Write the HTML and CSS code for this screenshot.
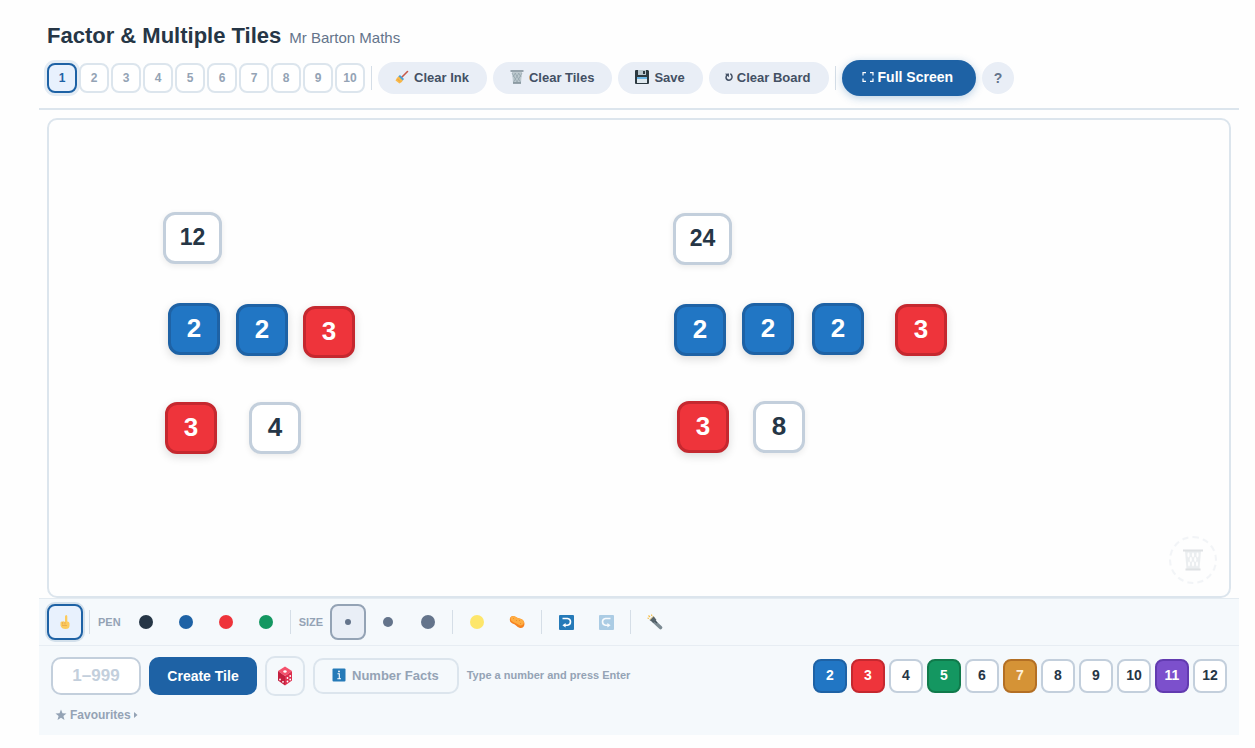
FILE: index.html
```html
<!DOCTYPE html>
<html lang="en">
<head>
    <meta charset="UTF-8">
    <meta name="viewport" content="width=device-width, initial-scale=1.0">
    <title>Factor &amp; Multiple Tiles</title>
    <link rel="stylesheet" href="styles.css">
</head>
<body>

    <!-- Title and board actions -->
    <header class="header">
        <div class="title-row">
            <h1>Factor &amp; Multiple Tiles</h1>
            <span class="subtitle">Mr Barton Maths</span>
        </div>
        <div class="actions">
            <nav class="pages">
                <button class="page active">1</button>
                <button class="page">2</button>
                <button class="page">3</button>
                <button class="page">4</button>
                <button class="page">5</button>
                <button class="page">6</button>
                <button class="page">7</button>
                <button class="page">8</button>
                <button class="page">9</button>
                <button class="page">10</button>
            </nav>
            <span class="divider"></span>
            <button class="pill">
                <svg width="16" height="16" viewBox="0 0 16 16">
                    <path d="M8 8 L13.5 2.5" stroke="#c65a4a" stroke-width="1.6" stroke-linecap="round"/>
                    <path d="M5 7 L9 11 Q8 14 5.500 14.5 L1.5 11.5 Q2.5 8.5 5 7Z" fill="#f9b94b"/>
                    <path d="M6 6 L10 10 L8.8 11.6 L4.4 7.2Z" fill="#4a9fd4"/>
                    <path d="M3.500 10 L6 12.5" stroke="#e59a2f" stroke-width="0.8"/>
                </svg>
                Clear Ink
            </button>
            <button class="pill">
                <svg width="16" height="16" viewBox="0 0 16 16">
                    <path d="M3 3 H13 L12 14 H4Z" fill="#bcc8ce"/>
                    <path d="M3 4 L8 13 M6 4 L11.5 13 M9.5 4 L12 8 M13 4 L8 13 M10 4 L4.5 13 M6.5 4 L4 8" stroke="#8fa0a9" stroke-width="0.7" fill="none"/>
                    <path d="M1.5 2 H14.5 M4 14 H12" stroke="#7b8b94" stroke-width="1.5"/>
                </svg>
                Clear Tiles
            </button>
            <button class="pill">
                <svg width="16" height="16" viewBox="0 0 16 16">
                    <path d="M1 2 Q1 1 2 1 H14 L15 2 V14 Q15 15 14 15 H2 Q1 15 1 14Z" fill="#2c3940"/>
                    <rect x="4" y="1" width="8" height="5" fill="#b9c6cd"/>
                    <rect x="9" y="2" width="2" height="3" fill="#2c3940"/>
                    <rect x="3" y="8" width="10" height="6" fill="#dfe8ee"/>
                    <rect x="3" y="8" width="10" height="2" fill="#6cb7e6"/>
                </svg>
                Save
            </button>
            <button class="pill">
                <svg width="8" height="12" viewBox="0 0 8 12">
                    <path d="M5.4 2.6 Q7.3 4 7 6.4 Q6.4 9.3 3.8 9.300 Q1.200 9 1 6.4 Q1 4.600 2.600 3.6" fill="none" stroke="#435064" stroke-width="1.5"/>
                    <path d="M0 2.8 L4 2.4 L3.8 6.2Z" fill="#435064"/>
                </svg>
                Clear Board
            </button>
            <span class="divider"></span>
            <button class="pill pill-primary">
                <svg width="12" height="12" viewBox="0 0 12 12">
                    <path d="M1 4.6 V1.6 H4 M8 1.6 H11 V4.6 M11 7.4 V10.4 H8 M4 10.4 H1 V7.4" fill="none" stroke="#fff" stroke-width="1.2"/>
                </svg>
                Full Screen
            </button>
            <button class="help">?</button>
        </div>
    </header>

    <!-- Board with the loose tiles -->
    <main class="board">
        <button class="tile wide pos-a1">12</button>
        <button class="tile two pos-a2">2</button>
        <button class="tile two pos-a3">2</button>
        <button class="tile three pos-a4">3</button>
        <button class="tile three pos-a5">3</button>
        <button class="tile pos-a6">4</button>

        <button class="tile wide pos-b1">24</button>
        <button class="tile two pos-b2">2</button>
        <button class="tile two pos-b3">2</button>
        <button class="tile two pos-b4">2</button>
        <button class="tile three pos-b5">3</button>
        <button class="tile three pos-b6">3</button>
        <button class="tile pos-b7">8</button>

        <div class="bin">
            <svg width="20" height="22" viewBox="0 0 20 22">
                <path d="M2 2 H18 L16.5 20 H3.5Z" fill="#a5b3bd"/>
                <g fill="#fff">
                    <ellipse cx="5.5" cy="6" rx="1.1" ry="2.4"/>
                    <ellipse cx="10" cy="6" rx="1.1" ry="2.4"/>
                    <ellipse cx="14.5" cy="6" rx="1.1" ry="2.4"/>
                    <ellipse cx="7.8" cy="10.5" rx="1.1" ry="2.4"/>
                    <ellipse cx="12.2" cy="10.5" rx="1.1" ry="2.4"/>
                    <ellipse cx="6" cy="15" rx="1" ry="2.4"/>
                    <ellipse cx="10" cy="15" rx="1.1" ry="2.4"/>
                    <ellipse cx="14" cy="15" rx="1" ry="2.4"/>
                </g>
                <path d="M0 1.5 H20 M2.5 20.5 H17.5" stroke="#66757f" stroke-width="2"/>
            </svg>
        </div>
    </main>

    <!-- Drawing tools -->
    <section class="tools">
        <button class="tool selected" aria-label="Move">
            <svg width="12" height="16" viewBox="0 0 12 16">
                <path d="M6 8 V2.5 Q6.2 1 7.2 1 Q8.3 1 8.3 2.5 V7.5 Q10.5 7.5 10.5 9.5 V11.5 Q10.5 15 6.5 15 Q2.5 15 1.5 11.5 V8.5 Q2 7 3.5 7.5 Q4.8 6.8 6 8Z" fill="#fccb5e"/>
                <path d="M3.6 8 V10.5 M6 8 V10.5 M3 11.5 H8" stroke="#e5a64e" stroke-width="0.8" fill="none"/>
            </svg>
        </button>
        <span class="divider"></span>
        <span class="label">PEN</span>
        <button class="tool" aria-label="Black pen"><span class="dot black"></span></button>
        <button class="tool" aria-label="Blue pen"><span class="dot blue"></span></button>
        <button class="tool" aria-label="Red pen"><span class="dot red"></span></button>
        <button class="tool" aria-label="Green pen"><span class="dot green"></span></button>
        <span class="divider"></span>
        <span class="label">SIZE</span>
        <button class="tool size-selected" aria-label="Thin"><span class="dot grey small"></span></button>
        <button class="tool" aria-label="Medium"><span class="dot grey medium"></span></button>
        <button class="tool" aria-label="Thick"><span class="dot grey"></span></button>
        <span class="divider"></span>
        <button class="tool" aria-label="Highlighter"><span class="dot yellow"></span></button>
        <button class="tool" aria-label="Eraser">
            <svg width="16" height="14" viewBox="0 0 16 14">
                <path d="M1 3 Q2.5 0 6 1.5 Q8 3 10.5 3.5 Q15.5 4.5 15.5 9 Q15 13.5 11 13 Q8.5 12 7 10.5 Q5.5 9 3.5 8.5 Q0 7 1 3Z" fill="#f58220"/>
                <path d="M1.5 2.5 Q3.5 0 6 1.5 Q8 3 10.5 3.5 Q14.5 4 15 7.5 Q14 11 10.5 10.3 Q8 8.5 5 7.4 Q1 6 1.5 2.5Z" fill="#ffad42"/>
                <path d="M4 3.5 H5 M7 5.5 H8 M10 5.5 H11 M11 8.5 H12" stroke="#ee922c" stroke-width="1"/>
            </svg>
        </button>
        <span class="divider"></span>
        <button class="tool" aria-label="Undo">
            <svg width="15" height="15" viewBox="0 0 15 15">
                <rect width="15" height="15" rx="1" fill="#257ab8"/>
                <path d="M3.5 3.5 H8.5 Q11.5 3.800 11.5 6.8 Q11.5 9.8 8.5 10.2 H6" fill="none" stroke="#fff" stroke-width="1.6"/>
                <path d="M6.6 8 V12.4 L3.4 10.2Z" fill="#fff"/>
            </svg>
        </button>
        <button class="tool" aria-label="Redo" disabled>
            <svg width="15" height="15" viewBox="0 0 15 15">
                <rect width="15" height="15" rx="1" fill="#257ab8"/>
                <path d="M11.5 3.5 H6.5 Q3.5 3.8 3.5 6.8 Q3.5 9.8 6.5 10.2 H9" fill="none" stroke="#fff" stroke-width="1.6"/>
                <path d="M8.4 8 V12.4 L11.6 10.2Z" fill="#fff"/>
            </svg>
        </button>
        <span class="divider"></span>
        <button class="tool" aria-label="Torch">
            <svg width="16" height="16" viewBox="0 0 16 16">
                <path d="M7 7.5 L13.5 13.5" stroke="#7b8a92" stroke-width="3.6" stroke-linecap="round"/>
                <path d="M2.5 6 L6.5 2 L9.5 6 L6.5 9Z" fill="#56646c"/>
                <path d="M8 7 L10 9" stroke="#46545c" stroke-width="1.5"/>
                <path d="M0.5 4 L2 4.5 M1.5 1.5 L3 3 M4.5 0.5 L4.8 2" stroke="#f6bd45" stroke-width="1.2"/>
                <path d="M2.5 6 L6.5 2" stroke="#f9d98c" stroke-width="1"/>
            </svg>
        </button>
    </section>

    <!-- Tile maker and tray -->
    <footer class="panel">
        <div class="panel-row">
            <input class="number-input" type="text" inputmode="numeric" placeholder="1–999" aria-label="Tile number">
            <button class="create">Create Tile</button>
            <button class="dice" aria-label="Random tile">
                <svg width="16" height="20" viewBox="0 0 16 20">
                    <path d="M8 0.500 L15 5 L8 10 L1 5Z" fill="#f4516c"/>
                    <path d="M1 5 L8 10 V19.500 L1 14.500Z" fill="#c41f3e"/>
                    <path d="M15 5 L8 10 V19.500 L15 14.500Z" fill="#dd2e4e"/>
                    <g fill="#fff">
                        <ellipse cx="8" cy="5.5" rx="1.7" ry="1.2"/>
                        <circle cx="3" cy="13.5" r="0.9"/>
                        <circle cx="6" cy="15.800" r="0.9"/>
                        <circle cx="10.5" cy="12" r="0.9"/>
                        <circle cx="13.2" cy="10" r="0.9"/>
                        <circle cx="10.5" cy="15.5" r="0.9"/>
                        <circle cx="13.2" cy="13.5" r="0.9"/>
                    </g>
                </svg>
            </button>
            <button class="facts">
                <svg width="14" height="14" viewBox="0 0 14 14">
                    <rect width="13" height="13" x="0.5" y="0.5" rx="1" fill="#257ab8"/>
                    <path d="M5.5 5.8 H7.3 V10.8 M5.3 10.8 H9" fill="none" stroke="#fff" stroke-width="1.1"/>
                    <circle cx="7" cy="3.4" r="0.9" fill="#fff"/>
                </svg>
                Number Facts
            </button>
            <span class="hint">Type a number and press Enter</span>
            <div class="tray">
                <button class="mini two">2</button>
                <button class="mini three">3</button>
                <button class="mini">4</button>
                <button class="mini five">5</button>
                <button class="mini">6</button>
                <button class="mini seven">7</button>
                <button class="mini">8</button>
                <button class="mini">9</button>
                <button class="mini">10</button>
                <button class="mini eleven">11</button>
                <button class="mini">12</button>
            </div>
        </div>
        <button class="favourites">
            <svg width="12" height="12" viewBox="0 0 12 12">
                <path d="M6 0.5 L7.5 4.3 L11.5 4.5 L8.4 7 L9.5 11 L6 8.7 L2.5 11 L3.6 7 L0.5 4.5 L4.5 4.3Z" fill="#94a3b5"/>
            </svg>
            Favourites
            <svg width="4" height="6" viewBox="0 0 4 6">
                <path d="M0 0 L3.5 3 L0 6Z" fill="#94a3b5"/>
            </svg>
        </button>
    </footer>

</body>
</html>
```

FILE: styles.css
```css
* {
    box-sizing: border-box;
}

body {
    display: flex;
    flex-direction: column;
    min-height: 100vh;
    margin: 0;
    padding: 0 16px 13px 39px;
    background-color: #fefefe;
    color: #263646;
    font-family: "Liberation Sans", Arial, sans-serif;
}

button,
input {
    font-family: inherit;
    font-weight: bold;
}

button {
    display: flex;
    justify-content: center;
    align-items: center;
    padding: 0;
    border: none;
    background: none;
    cursor: pointer;
}

svg {
    flex-shrink: 0;
}

/* Header */
.header {
    padding: 22px 8px 12px;
    border-bottom: 2px solid #dce5ed;
}

.title-row {
    display: flex;
    align-items: baseline;
    gap: 8px;
    margin-bottom: 10px;
}

h1 {
    margin: 0;
    font-size: 22px;
    line-height: 28px;
}

.subtitle {
    color: #64748b;
    font-size: 15px;
}

.actions {
    display: flex;
    align-items: center;
    gap: 6px;
}

.pages {
    display: flex;
    gap: 2px;
}

.page {
    width: 30px;
    height: 30px;
    border: 2px solid #dce5ed;
    border-radius: 8px;
    background-color: #fff;
    color: #94a3b5;
    font-size: 12px;
}

.page.active {
    border-color: #1e62a5;
    background-color: #e8f1fd;
    color: #1e62a5;
    box-shadow: 0 0 0 3px #e4ecf4;
}

.divider {
    width: 1px;
    height: 24px;
    background-color: #d5dee7;
}

.pill {
    gap: 4px;
    height: 32px;
    padding: 0 18px 2px 16px;
    border-radius: 18px;
    background-color: #e9eef6;
    color: #435064;
    font-size: 13px;
}

.pill-primary {
    height: 36px;
    padding: 0 23px 2px 20px;
    background-color: #1e62a5;
    color: #fff;
    font-size: 14px;
    box-shadow: 0 2px 8px rgba(30, 98, 165, 0.3);
}

.help {
    width: 32px;
    height: 32px;
    border-radius: 50%;
    background-color: #e9eef6;
    color: #64748b;
    font-size: 14px;
}

/* Board */
.board {
    position: relative;
    flex: 1;
    min-height: 400px;
    margin: 8px 8px 0;
    border: 2px solid #dce5ed;
    border-radius: 10px;
    background-color: #fefefe;
}

.tile {
    position: absolute;
    width: 52px;
    height: 52px;
    padding-bottom: 2px;
    border: 3px solid #c3cfdc;
    border-radius: 12px;
    background-color: #fff;
    color: #263646;
    font-size: 26px;
    box-shadow: 0 2px 6px rgba(0, 0, 0, 0.08);
}

.wide {
    width: 59px;
    font-size: 23px;
}

.two {
    border-color: #1e62a5;
    background-color: #2176c4;
    color: #fff;
}

.three {
    border-color: #c5282f;
    background-color: #ee343b;
    color: #fff;
}

.tile.two,
.tile.three {
    box-shadow: 0 3px 10px rgba(0, 0, 0, 0.14);
}

.pos-a1 { left: 114px; top: 92px; }
.pos-a2 { left: 119px; top: 183px; }
.pos-a3 { left: 187px; top: 184px; }
.pos-a4 { left: 254px; top: 186px; }
.pos-a5 { left: 116px; top: 282px; }
.pos-a6 { left: 200px; top: 282px; }
.pos-b1 { left: 624px; top: 93px; }
.pos-b2 { left: 625px; top: 184px; }
.pos-b3 { left: 693px; top: 183px; }
.pos-b4 { left: 763px; top: 183px; }
.pos-b5 { left: 846px; top: 184px; }
.pos-b6 { left: 628px; top: 281px; }
.pos-b7 { left: 704px; top: 281px; }

.bin {
    position: absolute;
    right: 12px;
    bottom: 12px;
    display: flex;
    justify-content: center;
    align-items: center;
    width: 48px;
    height: 48px;
    border: 2px dashed #c3cfdc;
    border-radius: 50%;
    opacity: 0.2;
}

/* Drawing tools */
.tools {
    display: flex;
    align-items: center;
    gap: 4px;
    padding: 5px 8px;
    border-top: 1px solid #e4ebf1;
    background-color: #f5f9fc;
}

.tools .divider {
    margin: 0 2px;
}

.label {
    padding: 0 3px 0 2px;
    color: #94a3b5;
    font-size: 11px;
    font-weight: bold;
}

.tool {
    width: 36px;
    height: 36px;
    border-radius: 8px;
}

.tool:disabled {
    opacity: 0.35;
}

.selected {
    border: 2px solid #1e62a5;
    background-color: #e8f1fd;
    box-shadow: 0 0 0 2px #d3e0eb;
}

.size-selected {
    border: 2px solid #94a3b5;
    background-color: #e9eef6;
}

.dot {
    width: 14px;
    height: 14px;
    border-radius: 50%;
}

.medium {
    width: 10px;
    height: 10px;
}

.small {
    width: 6px;
    height: 6px;
}

.black { background-color: #263646; }
.blue { background-color: #1e62a5; }
.red { background-color: #ee343b; }
.green { background-color: #149761; }
.grey { background-color: #64748b; }
.yellow { background-color: #fde66b; }

/* Bottom panel */
.panel {
    padding: 10px 12px 9px;
    border-top: 1px solid #e7edf3;
    background-color: #f5f9fc;
}

.panel-row {
    display: flex;
    align-items: center;
    gap: 8px;
    margin-bottom: 8px;
}

.number-input {
    width: 90px;
    height: 38px;
    padding: 0 8px;
    border: 2px solid #c3cfdc;
    border-radius: 10px;
    background-color: #fff;
    color: #263646;
    font-size: 17px;
    text-align: center;
}

.number-input::placeholder {
    color: #c3cfdc;
}

.create {
    min-width: 108px;
    height: 38px;
    padding: 0 18px;
    border-radius: 10px;
    background-color: #1e62a5;
    color: #fff;
    font-size: 14px;
}

.dice {
    width: 40px;
    height: 40px;
    border: 2px solid #dce5ed;
    border-radius: 10px;
}

.facts {
    gap: 6px;
    height: 36px;
    padding: 0 18px 2px 17px;
    border: 2px solid #dce5ed;
    border-radius: 10px;
    color: #94a3b5;
    font-size: 13px;
}

.hint {
    padding-bottom: 2px;
    color: #94a3b5;
    font-size: 11px;
    font-weight: bold;
}

.tray {
    display: flex;
    gap: 4px;
    margin-left: auto;
}

.mini {
    width: 34px;
    height: 34px;
    padding-bottom: 2px;
    border: 2px solid #c3cfdc;
    border-radius: 8px;
    background-color: #fff;
    color: #263646;
    font-size: 14px;
}

.mini.two { border-color: #1e62a5; background-color: #2176c4; color: #fff; }
.mini.three { border-color: #c5282f; background-color: #ee343b; color: #fff; }
.mini.five { border-color: #107a4b; background-color: #149761; color: #fff; }
.mini.seven { border-color: #b36f24; background-color: #d59336; color: #fdf0dc; }
.mini.eleven { border-color: #623bb0; background-color: #7c50cc; color: #fff; }

.favourites {
    gap: 3px;
    height: 22px;
    padding: 0 4px;
    color: #94a3b5;
    font-size: 12px;
}
```
